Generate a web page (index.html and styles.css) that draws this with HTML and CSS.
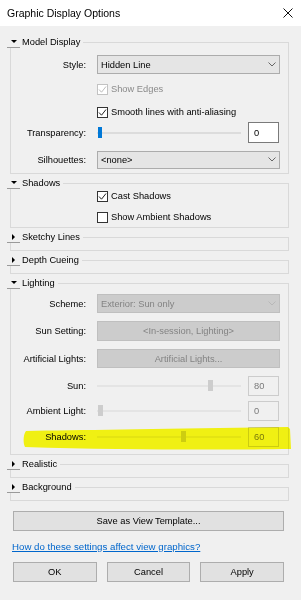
FILE: index.html
```html
<!DOCTYPE html>
<html lang="en">
<head>
  <meta charset="UTF-8" />
  <title>Graphic Display Options</title>
  <meta name="viewport" content="width=device-width, initial-scale=1" />
  <link rel="stylesheet" href="styles.css">
</head>
<body>
  <div class="dialog">
    <div class="titlebar">
      <span class="title">Graphic Display Options</span>
      <svg class="close" width="10" height="10" viewBox="0 0 10 10"><path d="M0.5 0.5 L9.5 9.5 M9.5 0.5 L0.5 9.5" stroke="#111" stroke-width="1" fill="none"/></svg>
    </div>

    <div class="panel">
      <!-- Model Display -->
      <div class="group">
        <div class="group-head"><span class="toggle"><i class="tri-down"></i></span><span class="group-title">Model Display</span></div>
        <div class="group-body model">
          <div class="row">
            <label>Style:</label>
            <div class="select">Hidden Line<svg class="chev" width="8" height="5" viewBox="0 0 8 5"><polyline points="0.5,0.5 4,4 7.5,0.5" fill="none" stroke="#666" stroke-width="1"/></svg></div>
          </div>
          <div class="row row-check gap-8">
            <span></span>
            <div class="checkline disabled"><span class="check"><svg width="9" height="9" viewBox="0 0 9 9"><polyline points="1,4.5 3.5,7.2 8,1.5" fill="none" stroke="#bdbdbd" stroke-width="1"/></svg></span>Show Edges</div>
          </div>
          <div class="row row-check gap-9">
            <span></span>
            <div class="checkline"><span class="check"><svg width="9" height="9" viewBox="0 0 9 9"><polyline points="1,4.5 3.5,7.2 8,1.5" fill="none" stroke="#222" stroke-width="1"/></svg></span>Smooth lines with anti-aliasing</div>
          </div>
          <div class="row row-slider gap-3">
            <label>Transparency:</label>
            <div class="slidebox">
              <div class="slider"><span class="thumb blue" style="margin-left: 0%"></span></div>
              <div class="num">0</div>
            </div>
          </div>
          <div class="row gap-7">
            <label>Silhouettes:</label>
            <div class="select short">&lt;none&gt;<svg class="chev" width="8" height="5" viewBox="0 0 8 5"><polyline points="0.5,0.5 4,4 7.5,0.5" fill="none" stroke="#666" stroke-width="1"/></svg></div>
          </div>
        </div>
      </div>

      <!-- Shadows -->
      <div class="group">
        <div class="group-head"><span class="toggle"><i class="tri-down"></i></span><span class="group-title">Shadows</span></div>
        <div class="group-body shadows">
          <div class="row row-check">
            <span></span>
            <div class="checkline"><span class="check"><svg width="9" height="9" viewBox="0 0 9 9"><polyline points="1,4.5 3.5,7.2 8,1.5" fill="none" stroke="#222" stroke-width="1"/></svg></span>Cast Shadows</div>
          </div>
          <div class="row row-check gap-7">
            <span></span>
            <div class="checkline"><span class="check"></span>Show Ambient Shadows</div>
          </div>
        </div>
      </div>

      <div class="group">
        <div class="group-head"><span class="toggle"><i class="tri-right"></i></span><span class="group-title">Sketchy Lines</span></div>
        <div class="group-body closed"></div>
      </div>

      <div class="group">
        <div class="group-head"><span class="toggle"><i class="tri-right"></i></span><span class="group-title">Depth Cueing</span></div>
        <div class="group-body closed"></div>
      </div>

      <!-- Lighting -->
      <div class="group">
        <div class="group-head"><span class="toggle"><i class="tri-down"></i></span><span class="group-title">Lighting</span></div>
        <div class="group-body lighting">
          <div class="row">
            <label>Scheme:</label>
            <div class="select disabled">Exterior: Sun only<svg class="chev" width="8" height="5" viewBox="0 0 8 5"><polyline points="0.5,0.5 4,4 7.5,0.5" fill="none" stroke="#b8b8b8" stroke-width="1"/></svg></div>
          </div>
          <div class="row gap-8">
            <label>Sun Setting:</label>
            <div class="btn disabled tall">&lt;In-session, Lighting&gt;</div>
          </div>
          <div class="row gap-9">
            <label>Artificial Lights:</label>
            <div class="btn disabled">Artificial Lights...</div>
          </div>
          <div class="row row-slider gap-7">
            <label>Sun:</label>
            <div class="slidebox">
              <div class="slider off"><span class="thumb" style="margin-left: calc((100% - 5px) * 0.8)"></span></div>
              <div class="num off">80</div>
            </div>
          </div>
          <div class="row row-slider gap-4">
            <label>Ambient Light:</label>
            <div class="slidebox">
              <div class="slider off"><span class="thumb" style="margin-left: 0%"></span></div>
              <div class="num off">0</div>
            </div>
          </div>
          <div class="row row-slider gap-5 marked">
            <label>Shadows:</label>
            <div class="slidebox">
              <div class="slider off"><span class="thumb" style="margin-left: calc((100% - 5px) * 0.6)"></span></div>
              <div class="num off">60</div>
            </div>
            <svg class="marker" width="270" height="28" viewBox="0 0 270 28"><path d="M4,6 C60,5 150,4 266,2 L268,4 L269,24 C200,25 100,25 3,22 C1,18 1,10 4,6 Z" fill="#ffff14"/></svg>
          </div>
        </div>
      </div>

      <div class="group">
        <div class="group-head"><span class="toggle"><i class="tri-right"></i></span><span class="group-title">Realistic</span></div>
        <div class="group-body closed"></div>
      </div>

      <div class="group">
        <div class="group-head"><span class="toggle"><i class="tri-right"></i></span><span class="group-title">Background</span></div>
        <div class="group-body closed"></div>
      </div>
    </div>

    <div class="footer">
      <div class="btn wide">Save as View Template...</div>
      <div class="help"><a href="#">How do these settings affect view graphics?</a></div>
      <div class="actions">
        <div class="btn">OK</div>
        <div class="btn">Cancel</div>
        <div class="btn">Apply</div>
      </div>
    </div>
  </div>
</body>
</html>
```

FILE: styles.css
```css
* {
  box-sizing: border-box;
}
body {
  margin: 0;
  background: #f0f0f0;
  font-family: 'Liberation Sans', Arial, sans-serif;
  font-size: 9.3px;
  color: #000;
}
.dialog {
  width: 301px;
  height: 600px;
  background: #f0f0f0;
}
.titlebar {
  height: 26px;
  background: #fff;
  display: flex;
  align-items: center;
  justify-content: space-between;
  padding: 0 8px 1px 7px;
}
.title {
  font-size: 10.5px;
}
.close {
  display: block;
  margin-top: 1px;
}
.panel {
  padding: 10px 0 0 7px;
}
.group {
  width: 282px;
  margin-bottom: 3px;
}
.group-head {
  display: flex;
  height: 12px;
}
.group-head::after {
  content: '';
  flex: 1;
  margin: 6px 0 0 3px;
  border-top: 1px solid #d9d9d9;
  border-right: 1px solid #d9d9d9;
}
.toggle {
  width: 13px;
  height: 12px;
  border-bottom: 1px solid #9a9a9a;
  display: flex;
  align-items: center;
  justify-content: center;
  margin-right: 2px;
}
.tri-down {
  width: 0;
  height: 0;
  border-left: 3px solid transparent;
  border-right: 3px solid transparent;
  border-top: 3px solid #000;
}
.tri-right {
  width: 0;
  height: 0;
  border-top: 3px solid transparent;
  border-bottom: 3px solid transparent;
  border-left: 3px solid #000;
}
.group-title {
  line-height: 12px;
}
.group-body {
  margin-left: 3px;
  border: 1px solid #d9d9d9;
  border-top: none;
  padding-right: 8px;
}
.group-body.closed {
  height: 8px;
}
.group-body.model {
  padding-top: 7px;
  padding-bottom: 4px;
}
.group-body.shadows {
  padding-bottom: 3px;
}
.group-body.lighting {
  padding-top: 5px;
  padding-bottom: 7px;
}
.row {
  display: grid;
  grid-template-columns: 76px 183px;
  column-gap: 10px;
  align-items: center;
  height: 19px;
}
.row label {
  text-align: right;
  padding-right: 1px;
  white-space: nowrap;
}
.row-check {
  height: 14px;
}
.row-slider {
  height: 21px;
}
.gap-3 { margin-top: 3px; }
.gap-4 { margin-top: 4px; }
.gap-5 { margin-top: 5px; }
.gap-7 { margin-top: 7px; }
.gap-8 { margin-top: 8px; }
.gap-9 { margin-top: 9px; }
.select {
  height: 19px;
  display: flex;
  align-items: center;
  justify-content: space-between;
  padding: 0 3px 0 3px;
  background: #e5e5e5;
  border: 1px solid #acacac;
}
.select.short {
  height: 18px;
}
.select.disabled {
  background: #cccccc;
  border-color: #bfbfbf;
  color: #838383;
}
.chev {
  display: block;
}
.checkline {
  display: flex;
  align-items: center;
  gap: 3px;
}
.checkline.disabled {
  color: #8a8a8a;
}
.check {
  width: 11px;
  height: 11px;
  border: 1px solid #333;
  background: #fff;
  display: flex;
  align-items: center;
  justify-content: center;
}
.checkline.disabled .check {
  border-color: #c2c2c2;
}
.check svg {
  display: block;
}
.slidebox {
  display: flex;
  align-items: center;
  gap: 7px;
  padding-right: 1px;
}
.slider {
  flex: 1;
  height: 11px;
  display: flex;
  align-items: center;
  padding-left: 1px;
  background: linear-gradient(#dcdcdc, #dcdcdc) left center / 100% 2px no-repeat;
}
.slider.off {
  background: linear-gradient(#e4e4e4, #e4e4e4) left center / 100% 2px no-repeat;
}
.thumb {
  flex-shrink: 0;
  width: 5px;
  height: 11px;
  background: #cdcdcd;
}
.thumb.blue {
  width: 4px;
  background: #0078d7;
}
.num {
  width: 31px;
  height: 21px;
  border: 1px solid #7a7a7a;
  background: #fff;
  padding-left: 5px;
  display: flex;
  align-items: center;
}
.num.off {
  height: 20px;
  border-color: #cccccc;
  background: #f0f0f0;
  color: #7a7a7a;
}
.marked {
  position: relative;
}
.marker {
  position: absolute;
  left: 11px;
  top: -1px;
  mix-blend-mode: multiply;
  pointer-events: none;
}
.btn {
  height: 19px;
  display: flex;
  align-items: center;
  justify-content: center;
  background: #e1e1e1;
  border: 1px solid #adadad;
}
.btn.tall {
  height: 20px;
}
.btn.disabled {
  background: #cccccc;
  border-color: #bfbfbf;
  color: #838383;
}
.footer {
  padding: 7px 17px 0 13px;
}
.btn.wide {
  height: 20px;
}
.help {
  margin-top: 7px;
  height: 16px;
  display: flex;
  align-items: center;
  margin-left: -1px;
}
.help a {
  color: #0066cc;
  font-size: 9.7px;
  text-decoration: underline;
}
.actions {
  margin-top: 8px;
  display: grid;
  grid-template-columns: 1fr 1fr 1fr;
  column-gap: 10px;
}
.actions .btn {
  height: 20px;
}
```
